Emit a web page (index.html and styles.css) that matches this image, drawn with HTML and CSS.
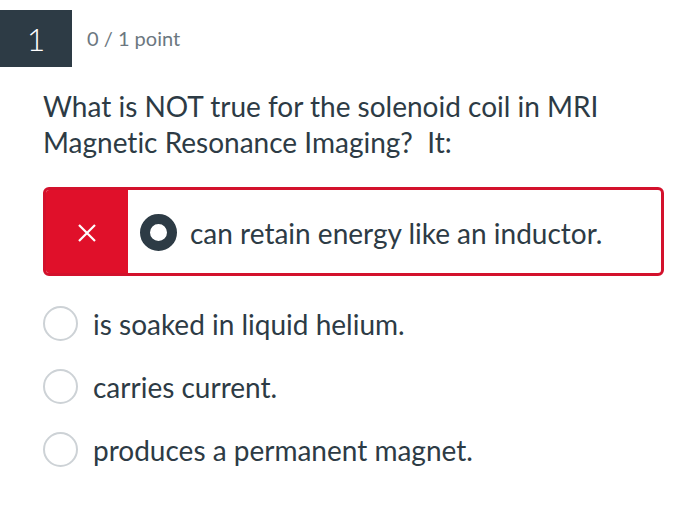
FILE: index.html
```html
<!DOCTYPE html>
<html lang="en">
<head>
<meta charset="utf-8">
<title>Quiz question</title>
<link rel="stylesheet" href="styles.css">
</head>
<body>
<div class="header">
  <div class="qnum">1</div>
  <div class="points">0 / 1 point</div>
</div>
<p class="question">What is NOT true for the solenoid coil in MRI<br>Magnetic Resonance Imaging?&nbsp; It:</p>
<div class="answer wrong">
  <div class="flag">
    <svg width="20" height="20" viewBox="0 0 20 20"><path d="M2 2 L18 18 M18 2 L2 18" stroke="#fff" stroke-width="2.2" fill="none"/></svg>
  </div>
  <div class="choice">
    <span class="radio selected"></span>
    <span class="label">can retain energy like an inductor.</span>
  </div>
</div>
<div class="options">
  <div class="choice"><span class="radio"></span><span class="label">is soaked in liquid helium.</span></div>
  <div class="choice"><span class="radio"></span><span class="label">carries current.</span></div>
  <div class="choice"><span class="radio"></span><span class="label">produces a permanent magnet.</span></div>
</div>
</body>
</html>
```
FILE: styles.css
```css
* { box-sizing: border-box; }
body {
  margin: 0;
  background: #fff;
  font-family: Lato, "Open Sans", sans-serif;
  color: #2d3b45;
  font-variant-ligatures: none;
}
.header {
  display: flex;
  align-items: center;
  margin-top: 10px;
}
.qnum {
  width: 72px;
  height: 57px;
  background: #2d3b45;
  color: #fff;
  font-size: 32px;
  font-weight: 300;
  display: flex;
  align-items: center;
  justify-content: center;
}
.points {
  margin-left: 15px;
  font-size: 20px;
  color: #6b7780;
  padding-bottom: 2px;
}
.question {
  margin: 21px 0 0 43px;
  font-size: 28px;
  line-height: 36px;
}
.answer {
  margin: 27px 0 0 43px;
  width: 621px;
  height: 89px;
  border: 3px solid #d3112c;
  border-radius: 6px;
  display: flex;
  overflow: hidden;
}
.flag {
  width: 82px;
  background: #e0102a;
  display: flex;
  align-items: center;
  justify-content: center;
  padding-top: 2px;
}
.answer .choice {
  padding-left: 12px;
  margin-top: 2px;
}
.choice {
  display: flex;
  align-items: center;
  font-size: 28px;
}
.radio {
  width: 35px;
  height: 35px;
  border-radius: 50%;
  border: 2px solid #cdd2d6;
  flex: none;
}
.radio.selected {
  width: 37px;
  height: 37px;
  border: 10px solid #2d3b45;
}
.label { margin-left: 15px; }
.answer .label { margin-left: 13px; }
.options {
  margin: 30px 0 0 43px;
  display: flex;
  flex-direction: column;
  gap: 28px;
}
```
